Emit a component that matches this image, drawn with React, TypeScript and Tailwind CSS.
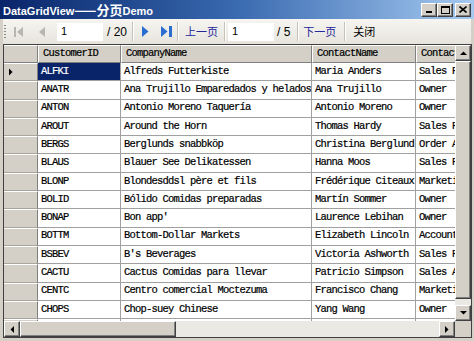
import React from 'react';

const rows: [string, string, string, string][] = [
    ['ALFKI', 'Alfreds Futterkiste', 'Maria Anders', 'Sales Representative'],
    ['ANATR', 'Ana Trujillo Emparedados y helados', 'Ana Trujillo', 'Owner'],
    ['ANTON', 'Antonio Moreno Taquería', 'Antonio Moreno', 'Owner'],
    ['AROUT', 'Around the Horn', 'Thomas Hardy', 'Sales Representative'],
    ['BERGS', 'Berglunds snabbköp', 'Christina Berglund', 'Order Administrator'],
    ['BLAUS', 'Blauer See Delikatessen', 'Hanna Moos', 'Sales Representative'],
    ['BLONP', 'Blondesddsl père et fils', 'Frédérique Citeaux', 'Marketing Manager'],
    ['BOLID', 'Bólido Comidas preparadas', 'Martín Sommer', 'Owner'],
    ['BONAP', 'Bon app′', 'Laurence Lebihan', 'Owner'],
    ['BOTTM', 'Bottom-Dollar Markets', 'Elizabeth Lincoln', 'Accounting Manager'],
    ['BSBEV', 'B′s Beverages', 'Victoria Ashworth', 'Sales Representative'],
    ['CACTU', 'Cactus Comidas para llevar', 'Patricio Simpson', 'Sales Agent'],
    ['CENTC', 'Centro comercial Moctezuma', 'Francisco Chang', 'Marketing Manager'],
    ['CHOPS', 'Chop-suey Chinese', 'Yang Wang', 'Owner'],
    ['COMMI', 'Comércio Mineiro', 'Pedro Afonso', 'Sales Associate'],
];

const widths = ['w-[83px]', 'w-[191px]', 'w-[104px]', 'w-[120px]'];
const mono = "font-['Liberation_Mono',monospace] text-[10.5px] tracking-[-0.8px] [-webkit-text-stroke:0.2px_currentColor]";
const raised = 'border border-t-white border-l-white border-r-[#404040] border-b-[#404040] shadow-[inset_-1px_-1px_0_#808080] bg-[#d4d0c8]';

const Tri = ({ dir, className = '' }: { dir: 'up' | 'down' | 'left' | 'right', className?: string }) => {
    const pts = {
        up: '0,4 7,4 3.5,0.5',
        down: '0,0 7,0 3.5,3.5',
        left: '4,0 4,7 0.5,3.5',
        right: '0,0 0,7 3.5,3.5',
    }[dir];
    const vb = dir === 'up' || dir === 'down' ? '0 0 7 4' : '0 0 4 7';
    return (
        <svg viewBox={vb} className={className} width={dir === 'up' || dir === 'down' ? 7 : 4} height={dir === 'up' || dir === 'down' ? 4 : 7}>
            <polygon points={pts} fill="#000" />
        </svg>
    );
};

const Sep = ({ className = '' }: { className?: string }) => (
    <div className={`h-[19px] w-[2px] border-l border-l-[#c5c2b8] border-r border-r-white ${className}`} />
);

const TitleButton = ({ children, className = '' }: { children: React.ReactNode, className?: string }) => (
    <div className={`w-[16px] h-[14px] flex items-center justify-center ${raised} ${className}`}>{children}</div>
);

export default function App() {
    return (
        <div className="w-[474px] h-[341px] bg-[#d4d0c8] flex flex-col overflow-hidden select-none">
            {/* title bar */}
            <div className="h-[19px] flex items-center bg-gradient-to-r from-[#0a246a] via-[#3a6ab0] to-[#a6caf0] pl-[3px] pr-[3px]">
                <div className="flex-grow text-white font-bold text-[11px] leading-none font-['Liberation_Sans','Noto_Sans_CJK_SC',sans-serif]">
                    DataGridView<span className="font-['Noto_Sans_CJK_SC',sans-serif] text-[13px]">——分页</span>Demo
                </div>
                <TitleButton>
                    <div className="w-[6px] h-[2px] bg-black mt-[5px]" />
                </TitleButton>
                <TitleButton>
                    <div className="w-[9px] h-[8px] border border-black border-t-2" />
                </TitleButton>
                <TitleButton className="ml-[2px]">
                    <svg width="8" height="7" viewBox="0 0 8 7">
                        <path d="M0.5 0.5 L7.5 6.5 M7.5 0.5 L0.5 6.5" stroke="#000" strokeWidth="1.6" />
                    </svg>
                </TitleButton>
            </div>

            {/* toolbar */}
            <div className="h-[25px] mx-[3px] bg-gradient-to-b from-[#f6f5f1] to-[#e6e4dc] flex items-center font-['Liberation_Sans','Noto_Sans_CJK_SC',sans-serif] text-[11px] text-black">
                <div className="ml-[1px] w-[2px] h-[16px] bg-[radial-gradient(circle,#8a8880_45%,transparent_50%)] bg-[length:2px_3px]" />
                <svg className="ml-[8px]" width="9" height="10" viewBox="0 0 9 10">
                    <rect x="0" y="0" width="2" height="10" fill="#b8b6ae" />
                    <polygon points="9,0 9,10 3,5" fill="#b8b6ae" />
                </svg>
                <svg className="ml-[15px]" width="7" height="10" viewBox="0 0 7 10">
                    <polygon points="7,0 7,10 1,5" fill="#b8b6ae" />
                </svg>
                <div className="ml-[12px] w-[46px] h-[18px] bg-white flex items-center pl-[4px]">1</div>
                <div className="ml-[4px] text-[12px]">/ 20</div>
                <Sep className="ml-[5px]" />
                <svg className="ml-[8px]" width="7" height="11" viewBox="0 0 7 11">
                    <polygon points="0,0 0,11 6.5,5.5" fill="#2a6cd0" />
                </svg>
                <svg className="ml-[12px]" width="11" height="11" viewBox="0 0 11 11">
                    <polygon points="0,0 0,11 6.5,5.5" fill="#2a6cd0" />
                    <rect x="8" y="0" width="3" height="11" fill="#2a6cd0" />
                </svg>
                <Sep className="ml-[5px]" />
                <div className="ml-[6px] text-[#24249c] font-['Noto_Sans_CJK_SC',sans-serif]">上一页</div>
                <Sep className="ml-[6px]" />
                <div className="ml-[2px] w-[46px] h-[18px] bg-white flex items-center pl-[4px]">1</div>
                <div className="ml-[3px] text-[12px]">/ 5</div>
                <Sep className="ml-[7px]" />
                <div className="ml-[4px] text-[#24249c] font-['Noto_Sans_CJK_SC',sans-serif]">下一页</div>
                <Sep className="ml-[8px]" />
                <div className="ml-[7px] font-['Noto_Sans_CJK_SC',sans-serif]">关闭</div>
            </div>

            {/* grid */}
            <div className="flex-1 mx-[3px] mr-[2px] border border-[#404040] bg-[#808080] flex flex-col overflow-hidden">
                <div className="flex-1 flex overflow-hidden">
                    <div className={`flex-1 overflow-hidden bg-[#808080] ${mono}`}>
                        <div className="flex h-[18px]">
                            <div className="w-[34px] shrink-0 bg-[#d4d0c8] border-r border-b border-[#808080] border-t border-t-white" />
                            {['CustomerID', 'CompanyName', 'ContactName', 'ContactTitle'].map((h, i) => (
                                <div key={h} className={`${widths[i]} shrink-0 bg-[#d4d0c8] border-r border-b border-[#808080] border-t border-t-white border-l border-l-white pl-[4px] flex items-center whitespace-nowrap overflow-hidden`}>{h}</div>
                            ))}
                        </div>
                        {rows.map((r, ri) => (
                            <div key={r[0]} className="flex h-[18.3px]">
                                <div className="w-[34px] shrink-0 bg-[#d4d0c8] border-r border-b border-r-[#808080] border-b-[#a8a59c] border-t border-t-white flex items-center pl-[5px]">
                                    {ri === 0 && <Tri dir="right" className="w-[4px] h-[8px]" />}
                                </div>
                                {r.map((c, ci) => (
                                    <div key={ci} className={`${widths[ci]} shrink-0 border-r border-b border-[#a0a0a0] pl-[3px] flex items-center whitespace-nowrap overflow-hidden ${ri === 0 && ci === 0 ? 'bg-[#0a246a] text-white' : 'bg-white text-black'}`}>{c}</div>
                                ))}
                            </div>
                        ))}
                    </div>
                    {/* vertical scrollbar */}
                    <div className="w-[16px] shrink-0 flex flex-col bg-[#ebe9e3]">
                        <div className={`h-[16px] flex items-center justify-center ${raised}`}>
                            <Tri dir="up" />
                        </div>
                        <div className={`h-[238px] ${raised}`} />
                        <div className="flex-1" />
                        <div className={`h-[16px] flex items-center justify-center ${raised}`}>
                            <Tri dir="down" />
                        </div>
                    </div>
                </div>
                {/* horizontal scrollbar */}
                <div className="h-[16px] flex shrink-0">
                    <div className="flex-1 flex bg-[#ebe9e3]">
                        <div className={`w-[16px] flex items-center justify-center ${raised}`}>
                            <Tri dir="left" />
                        </div>
                        <div className={`w-[156px] ${raised}`} />
                        <div className="flex-1" />
                        <div className={`w-[16px] flex items-center justify-center ${raised}`}>
                            <Tri dir="right" />
                        </div>
                    </div>
                    <div className="w-[16px] bg-[#d4d0c8]" />
                </div>
            </div>
            <div className="h-[3px] shrink-0" />
        </div>
    );
}
